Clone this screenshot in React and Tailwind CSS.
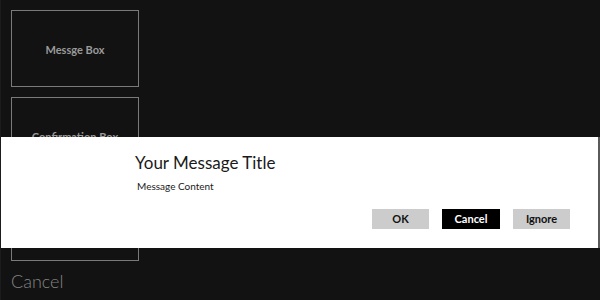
export default function App() {
  const box = "w-[128px] h-[77px] border-[1.5px] border-[#7a7a7a] flex items-center justify-center pt-[3px] text-[11px] font-bold text-[#9a9a9a]";
  return (
    <div className="relative w-[600px] h-[300px] bg-[#121212] overflow-hidden border-l border-[#1c1c1c]" style={{ fontFamily: 'Lato, "Open Sans", sans-serif' }}>
      <div className="flex flex-col gap-[10px] pl-[10px] pt-[10px]">
        <div className={box}>Messge Box</div>
        <div className={box}>Confirmation Box</div>
        <div className={box}>Other</div>
        <div className="text-[18px] font-light text-[#858585] leading-none pt-[1px]">Cancel</div>
      </div>
      <div className="absolute left-0 right-0 top-[137px] h-[111px] bg-white border-r-2 border-[#5a5a5a]">
        <div className="pl-[134px] pt-[17px]">
          <div className="text-[17px] font-normal text-[#1a1a1a] leading-none">Your Message Title</div>
          <div className="text-[10px] text-[#1a1a1a] mt-[10px] leading-none pl-[2px]">Message Content</div>
        </div>
        <div className="absolute left-[371px] top-[72px] flex gap-[13px] text-[11px] font-bold">
          <div className="w-[57px] h-[20px] bg-[#cccccc] text-[#111] flex items-center justify-center">OK</div>
          <div className="w-[58px] h-[20px] bg-black text-white flex items-center justify-center">Cancel</div>
          <div className="w-[57px] h-[20px] bg-[#cccccc] text-[#111] flex items-center justify-center">Ignore</div>
        </div>
      </div>
    </div>
  );
}
